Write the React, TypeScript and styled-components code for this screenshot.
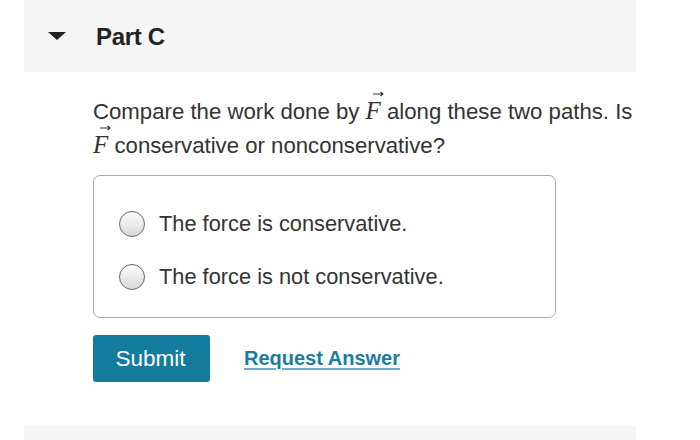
import React from 'react';
import styled, { createGlobalStyle } from 'styled-components';


// Style
const Global = createGlobalStyle`
  body {
    margin: 0;
    background: #fff;
    font-family: "Liberation Sans", Arial, sans-serif;
    color: #333;
  }
`;

const Page = styled.div`
  width: 612px;
  margin: 0 0 0 24px;
`;

const Header = styled.div`
  height: 72px;
  background: #f5f5f5;
  display: flex;
  align-items: center;
  padding-left: 24px;
  gap: 30px;
`;

const Caret = styled.span`
  width: 0;
  height: 0;
  border-left: 9px solid transparent;
  border-right: 9px solid transparent;
  border-top: 8px solid #222;
`;

const Title = styled.h2`
  margin: 2px 0 0;
  font-size: 24px;
  font-weight: bold;
  color: #222;
  letter-spacing: -0.3px;
`;

const Body = styled.div`
  padding: 23px 0 0 69px;
`;

const Question = styled.p`
  margin: 0;
  font-size: 22.2px;
  line-height: 34px;
  color: #333;
`;

const Vec = styled.span`
  position: relative;
  display: inline-block;
  font-family: "Liberation Serif", "Times New Roman", serif;
  font-style: italic;
  font-size: 25px;
  line-height: 1;
  color: #333;
  svg {
    position: absolute;
    left: 7px;
    top: -7px;
  }
`;

const Choices = styled.div`
  margin-top: 12px;
  width: 463px;
  height: 143px;
  box-sizing: border-box;
  border: 1.5px solid #aaa;
  border-radius: 7px;
  padding: 32px 0 0 25px;
  display: flex;
  flex-direction: column;
  gap: 21px;
`;

const Choice = styled.label`
  display: flex;
  align-items: center;
  gap: 14px;
  height: 32px;
  font-size: 21.8px;
  color: #333;
`;

const Radio = styled.span`
  width: 26px;
  height: 26px;
  box-sizing: border-box;
  border-radius: 50%;
  border: 1.5px solid #666;
  background: linear-gradient(#fdfdfd, #d9d9d9);
  flex-shrink: 0;
`;

const Actions = styled.div`
  display: flex;
  align-items: center;
  gap: 34px;
  margin-top: 17px;
`;

const Submit = styled.button`
  width: 117px;
  height: 47px;
  border: none;
  border-radius: 3px;
  background: #137b9d;
  color: #fff;
  font-family: "Liberation Sans", Arial, sans-serif;
  font-size: 22.5px;
  padding: 0 2px 0 0;
`;

const Link = styled.a`
  font-size: 20px;
  font-weight: bold;
  color: #197d9f;
  text-decoration: underline;
  text-decoration-color: #6aaec6;
  text-underline-offset: 3px;
  margin-top: -1px;
`;

const Footer = styled.div`
  margin-top: 44px;
  height: 14px;
  background: #f5f5f5;
`;


// Component
function VecF() {
  return (
    <Vec>
      F
      <svg width="11" height="6" viewBox="0 0 11 6">
        <path d="M0 3 H10 M7.5 1 L10 3 L7.5 5" stroke="#333" strokeWidth="1.1" fill="none" />
      </svg>
    </Vec>
  );
}

function App() {
  return (
    <Page>
      <Global />
      <Header>
        <Caret />
        <Title>Part C</Title>
      </Header>
      <Body>
        <Question>
          Compare the work done by <VecF /> along these two paths. Is <VecF /> conservative or nonconservative?
        </Question>
        <Choices>
          <Choice><Radio />The force is conservative.</Choice>
          <Choice><Radio />The force is not conservative.</Choice>
        </Choices>
        <Actions>
          <Submit>Submit</Submit>
          <Link href="#">Request Answer</Link>
        </Actions>
      </Body>
      <Footer />
    </Page>
  );
}

export default App;
